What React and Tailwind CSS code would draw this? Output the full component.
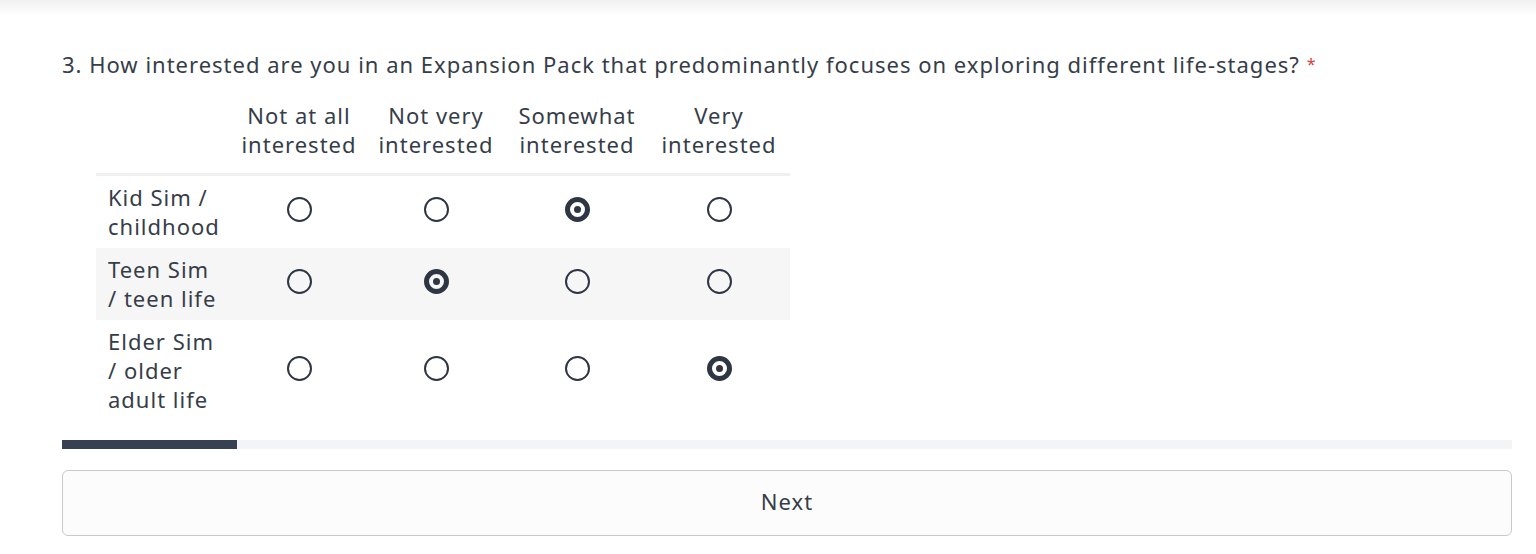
import React from 'react';

const columns = [
  ['Not at all', 'interested'],
  ['Not very', 'interested'],
  ['Somewhat', 'interested'],
  ['Very', 'interested'],
];

const rows = [
  { label: ['Kid Sim /', 'childhood'], value: 2, shaded: false },
  { label: ['Teen Sim', '/ teen life'], value: 1, shaded: true },
  { label: ['Elder Sim', '/ older', 'adult life'], value: 3, shaded: false },
];

const Radio = ({ checked }) =>
  checked ? (
    <div className="w-[25px] h-[25px] rounded-full border-[5px] border-[#2e3643] flex items-center justify-center">
      <div className="w-[7px] h-[7px] rounded-full bg-[#2e3643]" />
    </div>
  ) : (
    <div className="w-[25px] h-[25px] rounded-full border-[2.5px] border-[#2e3643]" />
  );

export default function App() {
  return (
    <div className="w-[1536px] h-[554px] bg-white text-[#363d49] font-['Noto_Sans',sans-serif] text-[22px] leading-[29px] tracking-[1px] overflow-hidden">
      <div className="h-4 bg-linear-to-b from-[#f1f1f1] to-white" />
      <div className="pl-[62px] pr-6 pt-[34px]">
        <p className="whitespace-nowrap">
          3. How interested are you in an Expansion Pack that predominantly focuses on exploring different life-stages?{' '}
          <span className="text-[#d9413a] text-[16px] align-top">*</span>
        </p>

        <div className="ml-[34px] mt-[22px] w-[694px]">
          <div className="grid grid-cols-[136px_134px_140px_142px_142px] border-b-[3px] border-[#f0f0f0] pb-[14px]">
            <div />
            {columns.map((c) => (
              <div key={c[0]} className="text-center whitespace-nowrap">
                <div>{c[0]}</div>
                <div>{c[1]}</div>
              </div>
            ))}
          </div>

          {rows.map((r) => (
            <div
              key={r.label[0]}
              className={`grid grid-cols-[136px_134px_140px_142px_142px] items-center py-[7px] ${r.shaded ? 'bg-[#f6f6f6]' : 'bg-white'}`}
            >
              <div className="pl-3 whitespace-nowrap">
                {r.label.map((l) => (
                  <div key={l}>{l}</div>
                ))}
              </div>
              {columns.map((c, i) => (
                <div key={c[0]} className="flex justify-center mb-[5px]">
                  <Radio checked={r.value === i} />
                </div>
              ))}
            </div>
          ))}
        </div>

        <div className="mt-[19px] h-[9px] bg-[#f3f4f6]">
          <div className="w-[175px] h-full bg-[#374151]" />
        </div>

        <button className="mt-[21px] w-full h-[66px] rounded-md border border-[#c9c9c9] bg-[#fcfcfc] text-[#363d49] text-[22px] tracking-[1px] pb-[3px]">
          Next
        </button>
      </div>
    </div>
  );
}
